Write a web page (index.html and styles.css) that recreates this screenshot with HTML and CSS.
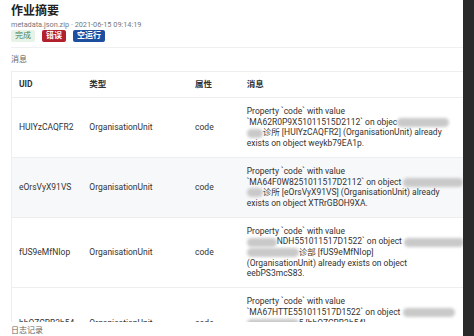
FILE: index.html
```html
<!DOCTYPE html>
<html lang="zh-CN">
<head>
    <meta charset="UTF-8">
    <meta name="viewport" content="width=device-width, initial-scale=1.0">
    <title>作业摘要</title>
    <link rel="stylesheet" href="styles.css">
</head>
<body>
    <div class="panel">
        <h1>作业摘要</h1>
        <div class="meta">metadata.json.zip · 2021-06-15 09:14:19</div>

        <!-- 状态标签 -->
        <div class="tags">
            <span class="tag tag-done">完成</span>
            <span class="tag tag-error">错误</span>
            <span class="tag tag-dry">空运行</span>
        </div>

        <div class="section-label">消息</div>

        <div class="table-wrap">
            <table class="msg-table">
                <thead>
                    <tr>
                        <th class="col-uid">UID</th>
                        <th class="col-type">类型</th>
                        <th class="col-prop">属性</th>
                        <th class="col-msg">消息</th>
                    </tr>
                </thead>
                <tbody>
                    <tr>
                        <td>HUIYzCAQFR2</td>
                        <td>OrganisationUnit</td>
                        <td>code</td>
                        <td>Property `code` with value<br>`MA62R0P9X51011515D2112` on objec<span class="blur blur-md"></span><br><span class="blur blur-sm"></span>诊所 [HUIYzCAQFR2] (OrganisationUnit) already<br>exists on object weykb79EA1p.</td>
                    </tr>
                    <tr class="striped">
                        <td>eOrsVyX91VS</td>
                        <td>OrganisationUnit</td>
                        <td>code</td>
                        <td>Property `code` with value<br>`MA64F0W8251011517D2112` on object <span class="blur blur-lg"></span><br><span class="blur blur-sm"></span>诊所 [eOrsVyX91VS] (OrganisationUnit) already<br>exists on object XTRrGBOH9XA.</td>
                    </tr>
                    <tr>
                        <td>fUS9eMfNIop</td>
                        <td>OrganisationUnit</td>
                        <td>code</td>
                        <td>Property `code` with value<br><span class="blur blur-xs"></span>NDH551011517D1522` on object <span class="blur blur-lg"></span><br><span class="blur blur-md"></span>诊部 [fUS9eMfNIop]<br>(OrganisationUnit) already exists on object<br>eebPS3mcS83.</td>
                    </tr>
                    <tr>
                        <td>hbOZCRB3b54</td>
                        <td>OrganisationUnit</td>
                        <td>code</td>
                        <td>Property `code` with value<br>`MA67HTTE551011517D1522` on object <span class="blur blur-md"></span><br><span class="blur blur-md"></span>5 [hbOZCRB3b54]<br>(OrganisationUnit) already exists on object<br>zJd8sTq2LmA.</td>
                    </tr>
                </tbody>
            </table>
        </div>

        <div class="section-label log-label">日志记录</div>
    </div>
</body>
</html>
```

FILE: styles.css
```css
/* 页面基础 */
body {
    margin: 0;
    background-color: #2a2a2a;
    font-family: Roboto, "Noto Sans CJK SC", sans-serif;
    color: #333;
}

.panel {
    width: 463px;
    height: 336px;
    background-color: white;
    box-sizing: border-box;
    padding: 3px 0 0 11px;
    overflow: hidden;
}

h1 {
    margin: 0;
    font-size: 12px;
    line-height: 17px;
    font-weight: 700;
    color: #222;
}

.meta {
    font-size: 7.3px;
    line-height: 9px;
    color: #777;
}

/* 状态标签 */
.tags {
    display: flex;
    gap: 7px;
    margin-top: 1px;
    padding-bottom: 5px;
    border-bottom: 1px solid #f0f0f0;
}

.tag {
    height: 12px;
    line-height: 12px;
    padding: 0 4px;
    font-size: 8px;
    border-radius: 2px;
    font-weight: 700;
}

.tag-done {
    background-color: #e8f3e8;
    color: #4f7f4f;
    font-weight: 400;
}

.tag-error {
    background-color: #b21f2d;
    color: white;
}

.tag-dry {
    background-color: #1d4f9e;
    color: white;
}

.section-label {
    font-size: 8px;
    line-height: 12px;
    color: #666;
    margin-top: 6px;
}

/* 消息表格 */
.table-wrap {
    margin-top: 5px;
    height: 250px;
    overflow: hidden;
    border-top: 1px solid #eee;
    border-left: 1px solid #eee;
}

.msg-table {
    width: 452px;
    border-collapse: collapse;
    font-size: 8.5px;
    line-height: 10.7px;
    color: #333;
}

.msg-table th {
    height: 25px;
    text-align: left;
    font-weight: 700;
    padding: 0 0 0 7px;
    border-bottom: 1px solid #eee;
}

.msg-table td {
    padding: 8px 0 8px 7px;
    vertical-align: middle;
    border-bottom: 1px solid #eee;
    white-space: nowrap;
}

.col-uid { width: 65px; }
.col-type { width: 106px; }
.col-prop { width: 50px; }

.striped td {
    background-color: #f7f8fa;
}

/* 隐私模糊块 */
.blur {
    display: inline-block;
    height: 9px;
    vertical-align: middle;
    background-color: #c9c9c9;
    border-radius: 5px;
    filter: blur(1.5px);
}

.blur-xs { width: 30px; }
.blur-sm { width: 16px; }
.blur-md { width: 52px; }
.blur-lg { width: 60px; }

.log-label {
    margin-top: 3px;
}
```
